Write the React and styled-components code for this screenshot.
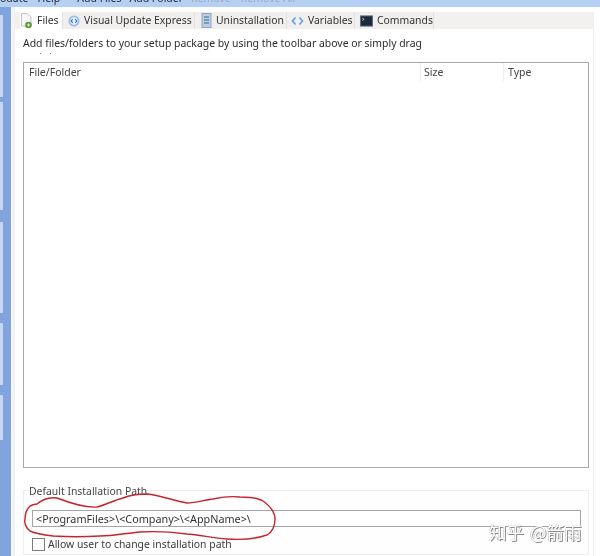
import React from "react";
import styled, { createGlobalStyle } from "styled-components";

const Global = createGlobalStyle`
  html, body { margin: 0; padding: 0; background: #fff; }
  body { font-family: "Noto Sans", "Open Sans", sans-serif; color: #2b2b2b; }
`;
const Page = styled.div`
  position: relative; width: 600px; height: 556px; overflow: hidden;
  display: flex; flex-direction: column; background: #fff; filter: blur(0.35px);
`;
const MenuBar = styled.div`
  height: 7px; flex: none; background: #b5d0f5; overflow: hidden; display: flex; align-items: flex-end;
  font-size: 10.5px; line-height: 14px; white-space: nowrap; padding-bottom: 2px; box-sizing: border-box;
`;
const MenuItem = styled.span`
  margin-left: ${p => p.$gap}px; color: ${p => p.$off ? "#a3aab8" : "#2b2b2b"};
`;
const Body = styled.div`flex: 1; display: flex; min-height: 0;`;
const Sidebar = styled.div`
  width: 11px; flex: none; background: #81a3de; display: flex; flex-direction: column; padding-top: 8px;
`;
const SidePanel = styled.div`
  width: 3px; height: ${p => p.$h}px; margin-bottom: ${p => p.$mb}px; background: #c7d6f2;
`;
const Main = styled.div`
  flex: 1; display: flex; flex-direction: column; padding: 5px 6px 0 0; min-width: 0; background: #fff;
  margin-left: 1px; border-left: 3px solid #f5f2ef;
`;
const Tabs = styled.div`
  display: flex; height: 17px; flex: none; padding-left: 5px; background: #f3f1ef; font-size: 10.4px; line-height: 17px;
`;
const Tab = styled.div`
  display: flex; align-items: center; gap: 4px; width: ${p => p.$w}px; padding-left: ${p => p.$pad}px; box-sizing: border-box; white-space: nowrap;
  background: ${p => p.$active ? "#fff" : "#f1efed"}; border-right: 1px solid #e4e2e0; color: #333;
`;
const TabBody = styled.div`
  flex: 1; display: flex; flex-direction: column; padding: 6px 4px 0 8px; border-right: 1px solid #eeeeee; background: #fff; min-height: 0;
`;
const Hint = styled.div`font-size: 10.45px; line-height: 17px; height: 17px; white-space: nowrap; color: #2c2c2c;`;
const Clip = styled.div`display: flex; gap: 9px; height: 9px; padding: 1px 0 0 17px; box-sizing: border-box;`;
const ClipDot = styled.span`width: 1px; height: 1px; background: #8a8a8a; display: block;`;
const List = styled.div`
  height: 404px; flex: none; border: 1px solid #a8a8a8; background: #fff; margin-top: 1px;
`;
const ListHead = styled.div`
  display: grid; grid-template-columns: 397px 83px 1fr; height: 18px; font-size: 10.5px; line-height: 18px; color: #444;
`;
const HeadCell = styled.div`padding-left: ${p => p.$pad}px; border-right: 1px solid ${p => p.$last ? "transparent" : "#ececec"};`;
const Group = styled.div`
  margin-top: 22px; height: 65px; flex: none; position: relative; border: 1px solid #eeeeee; background: #fefefe;
  display: flex; flex-direction: column; padding: 19px 7px 0 8px; box-sizing: border-box;
`;
const GroupTitle = styled.div`
  position: absolute; left: 5px; top: -7px; font-size: 10.4px; line-height: 15px; color: #444; background: #fff;
`;
const PathInput = styled.div`
  height: 17px; flex: none; box-sizing: border-box; border: 1px solid #a6a6a6; font-size: 10.8px; line-height: 15px;
  padding-left: 3px; color: #333; background: #fff; white-space: nowrap;
`;
const CheckRow = styled.label`
  display: flex; align-items: center; gap: 3px; margin-top: 10px; font-size: 10.4px; line-height: 14px; color: #3a3a3a; white-space: nowrap;
`;
const CheckBox = styled.span`width: 11px; height: 11px; flex: none; border: 1px solid #7d7d7d; background: #fff; display: block;`;
const Overlay = styled.svg`position: absolute; left: 0; top: 0; pointer-events: none;`;
const Watermark = styled.div`
  position: absolute; left: 489px; top: 521px; font-family: "Noto Sans CJK SC", sans-serif; font-size: 17.5px; line-height: 22px;
  color: #fff; text-shadow: 1px 1px 0 #8a8a8a, -0.5px -0.5px 0 #b5b5b5; white-space: nowrap; word-spacing: 2px;
`;

const FileIcon = () => (
  <svg width="13" height="17" viewBox="0 0 13 17">
    <path d="M1.5 1.5h6l3.5 3.5v9H1.5z" fill="#f7f7f7" stroke="#c4c4c4" />
    <circle cx="8.5" cy="13" r="3.3" fill="#5d9b3a" />
    <path d="M7 13h3M8.5 11.5v3" stroke="#e6f2dc" strokeWidth="1" />
  </svg>
);
const UpdateIcon = () => (
  <svg width="12" height="12" viewBox="0 0 13 13">
    <circle cx="6.5" cy="6.5" r="6" fill="#9dbce8" />
    <circle cx="6.5" cy="6.5" r="4" fill="#e9f1fb" />
    <path d="M5 4.5L3.6 6.5 5 8.5M8 4.5l1.4 2L8 8.5" fill="none" stroke="#3a6fc0" strokeWidth="1.2" />
  </svg>
);
const UninstallIcon = () => (
  <svg width="11" height="15" viewBox="0 0 11 15">
    <rect x="1" y="0.5" width="9" height="14" fill="#b9cde4" stroke="#8fa6c2" />
    <path d="M3 4h5M3 7h5M3 10h5" stroke="#43668f" strokeWidth="1" />
  </svg>
);
const VarIcon = () => (
  <svg width="13" height="10" viewBox="0 0 13 10">
    <path d="M4.5 1.5L1.5 5l3 3.5M8.5 1.5l3 3.5-3 3.5" fill="none" stroke="#6aa0dc" strokeWidth="1.7" />
  </svg>
);
const CmdIcon = () => (
  <svg width="13" height="12" viewBox="0 0 14 12">
    <rect x="0.5" y="0.5" width="13" height="11" fill="#1d2b38" stroke="#5c6f80" />
    <path d="M2.5 3l2 1.2-2 1.2" fill="none" stroke="#cfd8df" strokeWidth="0.9" />
  </svg>
);

export default function App() {
  return (
    <Page>
      <Global />
      <MenuBar>
        <MenuItem $gap={0}>odate</MenuItem>
        <MenuItem $gap={9}>Help</MenuItem>
        <MenuItem $gap={17}>Add Files</MenuItem>
        <MenuItem $gap={8}>Add Folder</MenuItem>
        <MenuItem $off $gap={8}>Remove</MenuItem>
        <MenuItem $off $gap={10}>Remove All</MenuItem>
      </MenuBar>
      <Body>
        <Sidebar>
          <SidePanel $h={82} $mb={5} />
          <SidePanel $h={108} $mb={12} />
          <SidePanel $h={91} $mb={10} />
          <SidePanel $h={62} $mb={10} />
          <SidePanel $h={45} $mb={0} />
        </Sidebar>
        <Main>
          <Tabs>
            <Tab $active $w={43} $pad={0}><FileIcon />Files</Tab>
            <Tab $w={132} $pad={5}><UpdateIcon />Visual Update Express</Tab>
            <Tab $w={92} $pad={6}><UninstallIcon />Uninstallation</Tab>
            <Tab $w={68} $pad={4}><VarIcon />Variables</Tab>
            <Tab $w={79} $pad={5}><CmdIcon />Commands</Tab>
          </Tabs>
          <TabBody>
            <Hint>Add files/folders to your setup package by using the toolbar above or simply drag</Hint>
            <Clip><ClipDot /><ClipDot /></Clip>
            <List>
              <ListHead>
                <HeadCell $pad={5}>File/Folder</HeadCell>
                <HeadCell $pad={3}>Size</HeadCell>
                <HeadCell $last $pad={4}>Type</HeadCell>
              </ListHead>
            </List>
            <Group>
              <GroupTitle>Default Installation Path</GroupTitle>
              <PathInput>{"<ProgramFiles>\\<Company>\\<AppName>\\"}</PathInput>
              <CheckRow><CheckBox />Allow user to change installation path</CheckRow>
            </Group>
          </TabBody>
        </Main>
      </Body>
      <Overlay width="600" height="556" viewBox="0 0 600 556">
        <path
          d="M37 504 C43 499 50 497 57 498 C70 503 84 508 97 507 C106 505 114 500 123 498 C130 495 138 494 147 494 C160 495 174 501 187 503 C196 503 204 500 213 499 C222 497 231 496 240 497 C250 497 258 498 263 501 C270 506 275 512 275 519 C275 527 272 532 267 535 C255 539 240 540 227 539 C213 538 200 535 187 534 C172 532 155 531 140 532 C127 533 113 536 100 536 C85 537 68 537 53 536 C44 535 36 534 30 531 C26 528 24 523 25 519 C25 514 27 509 30 506 C32 505 34 504 37 504 Z"
          fill="none" stroke="#c4242b" strokeWidth="1.4"
        />
      </Overlay>
      <Watermark>知乎 @箭雨</Watermark>
    </Page>
  );
}
